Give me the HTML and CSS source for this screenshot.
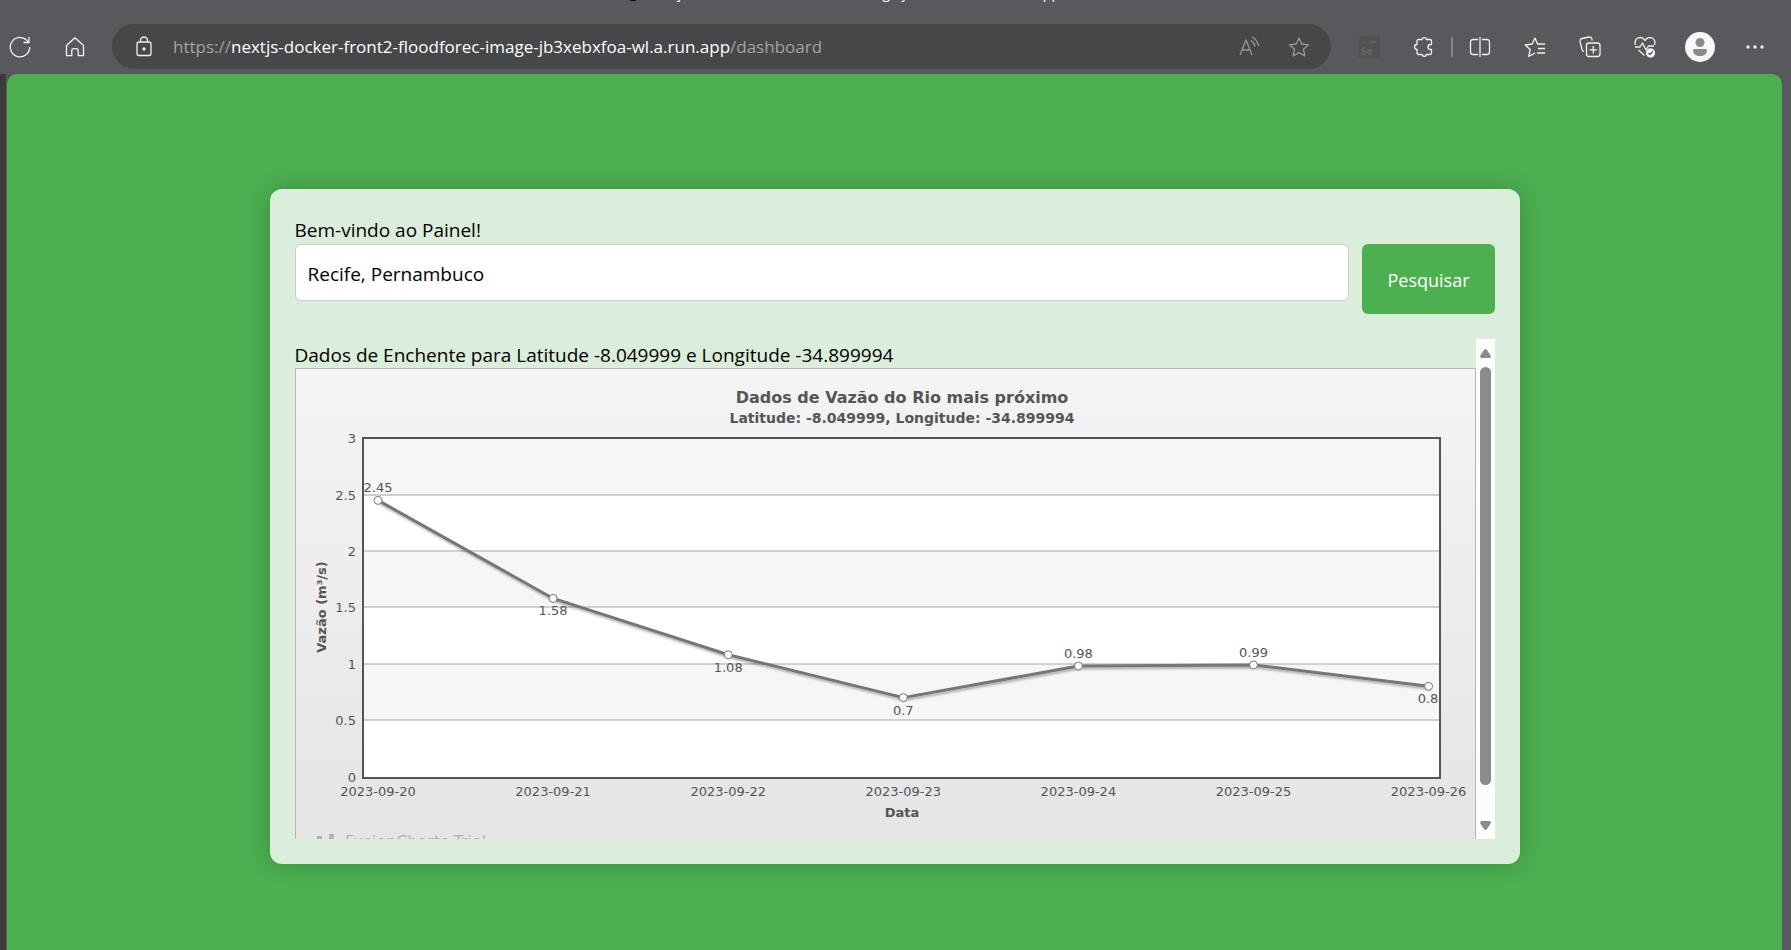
FILE: index.html
```html
<!DOCTYPE html>
<html lang="pt-BR">
  <head>
    <meta charset="UTF-8" />
    <title>Painel</title>
    <link rel="stylesheet" href="styles.css">
  </head>
  <body>
    <div class="tab">
      <span class="favicon"></span>
      nextjs-docker-front2-floodforec-image-jb3xebxfoa-wl.a.run.app
    </div>
    <header class="toolbar">
      <div class="nav">
        <button class="tool" aria-label="Atualizar">
          <svg width="24" height="24" viewBox="0 0 24 24"><path d="M20.500 7.500A9.700 9.700 0 1 0 21.700 12M21 2v5.500h-5.500" /></svg>
        </button>
        <button class="tool" aria-label="Início">
          <svg width="24" height="24" viewBox="0 0 24 24"><path d="M3.500 10.500 12 2.800l8.500 7.700v10.200h-5.300v-5a2 2 0 0 0-2-2h-2.400a2 2 0 0 0-2 2v5H3.500z" /></svg>
        </button>
      </div>
      <div class="address">
        <button class="tool" aria-label="Informações do site">
          <svg width="24" height="24" viewBox="0 0 24 24"><rect x="5" y="7" width="14" height="13.500" rx="2" /><path d="M8.500 7V5.500a3.500 3.500 0 0 1 7 0V7" /><circle class="solid" cx="12" cy="14" r="1" /></svg>
        </button>
        <p class="url">https://<span>nextjs-docker-front2-floodforec-image-jb3xebxfoa-wl.a.run.app</span>/dashboard</p>
        <button class="tool dim" aria-label="Ler em voz alta">
          <svg width="24" height="24" viewBox="0 0 24 24"><path d="M3 20 9 5l6 15M5 15h8M14 5.500a9 9 0 0 1 4 6M15 2a12 12 0 0 1 6.500 9" /></svg>
        </button>
        <button class="tool dim" aria-label="Favoritar">
          <svg width="24" height="24" viewBox="0 0 24 24"><path d="m12 3 2.800 6 6.700.8-5 4.500 1.400 6.700-5.900-3.400L6.100 21l1.400-6.700-5-4.500 6.700-.8z" /></svg>
        </button>
      </div>
      <div class="extensions">
        <button class="tool ext" aria-label="Selenium">
          <svg width="24" height="24" viewBox="0 0 24 24"><rect x="2" y="2" width="20" height="20" /><path class="block" d="M12 5h8v4h-8z" /><path d="M2 11h20" /><text x="4" y="20">Se</text></svg>
        </button>
        <button class="tool" aria-label="Extensões">
          <svg width="24" height="24" viewBox="0 0 24 24"><path d="M6.500 4.500H10a2.300 2.300 0 0 1 4.500 0H18A1.500 1.500 0 0 1 19.500 6v3.500h-1a2.500 2.500 0 0 0 0 5h1V18a1.500 1.500 0 0 1-1.500 1.500h-3.500a2.300 2.300 0 0 1-4.500 0H6.500A1.500 1.500 0 0 1 5 18v-3.500a2.500 2.500 0 0 1 0-5V6a1.500 1.500 0 0 1 1.500-1.500z" /></svg>
        </button>
        <span class="divider"></span>
        <button class="tool" aria-label="Dividir tela">
          <svg width="24" height="24" viewBox="0 0 24 24"><path d="M10 4.500H5A2.500 2.500 0 0 0 2.500 7v10A2.500 2.500 0 0 0 5 19.500h5M14 4.500h5A2.500 2.500 0 0 1 21.500 7v10a2.500 2.500 0 0 1-2.500 2.500h-5M12 2v20" /></svg>
        </button>
        <button class="tool" aria-label="Favoritos">
          <svg width="24" height="24" viewBox="0 0 24 24"><path d="M22 9h-7.500L12 3 9.200 9l-7 1 5 4.500L5.800 21.500 12 18M15 13.500h7M14 18h8" /></svg>
        </button>
        <button class="tool" aria-label="Coleções">
          <svg width="24" height="24" viewBox="0 0 24 24"><rect x="8.500" y="8" width="13.500" height="13.500" rx="2.500" /><path d="M15.300 11v7.500M11.500 14.800H19M6 16.500a2.500 2.500 0 0 1-2-2L2 6.500a2.500 2.500 0 0 1 2-3L11 2a2.500 2.500 0 0 1 3 2v1.500" /></svg>
        </button>
        <button class="tool" aria-label="Desempenho">
          <svg width="24" height="24" viewBox="0 0 24 24"><path d="M2.500 10a5 5 0 0 1 9.500-4.500A5 5 0 0 1 21.500 10M2 12h5l2.500-4 3.500 7 2.500-4H21M5.500 15l6 5.500" /><circle class="solid" cx="17.500" cy="18" r="4" /><path class="check" d="m15.500 18 1.500 1.500 3-3" /></svg>
        </button>
        <button class="tool avatar" aria-label="Perfil">
          <svg width="30" height="30" viewBox="0 0 30 30"><circle cx="15" cy="10.500" r="4.500" /><path d="M8 18.500A1.500 1.500 0 0 1 9.500 17h11a1.500 1.500 0 0 1 1.500 1.500C22 22 19 24 15 24s-7-2-7-5.500z" /></svg>
        </button>
        <button class="tool" aria-label="Mais">
          <svg width="24" height="24" viewBox="0 0 24 24"><g class="solid"><circle cx="5" cy="12" r="1" /><circle cx="12" cy="12" r="1" /><circle cx="19" cy="12" r="1" /></g></svg>
        </button>
      </div>
    </header>

    <div class="window">
      <main class="page">
        <section class="card">
          <form class="search">
            <div class="field">
              <label for="city">Bem-vindo ao Painel!</label>
              <input type="text" id="city" value="Recife, Pernambuco" />
            </div>
            <button type="button" class="submit">Pesquisar</button>
          </form>

          <div class="results">
            <div class="content" id="content">
              <p>Dados de Enchente para Latitude -8.049999 e Longitude -34.899994</p>
              <svg class="chart" viewBox="0 0 1181 500">
                <defs>
                  <linearGradient id="bg" x1="0" y1="0" x2="0" y2="1">
                    <stop offset="0" stop-color="#f4f4f4" />
                    <stop offset="1" stop-color="#e4e4e4" />
                  </linearGradient>
                  <filter id="shadow" x="-5%" y="-5%" width="110%" height="115%">
                    <feDropShadow dx="1" dy="2" stdDeviation="1" flood-color="#000" flood-opacity="0.300" />
                  </filter>
                </defs>
                <rect class="frame" x="0.500" y="0.500" width="1180" height="499" fill="url(#bg)" />
                <text class="title" x="607" y="35">Dados de Vazão do Rio mais próximo</text>
                <text class="subtitle" x="607" y="55">Latitude: -8.049999, Longitude: -34.899994</text>
                <rect class="plot" x="68" y="70" width="1078" height="340" />
                <g id="grid"></g>
                <rect class="border" x="68" y="70" width="1077" height="340" />
                <g id="series"></g>
                <text class="axis" x="607" y="449">Data</text>
                <text class="axis" transform="translate(31 239) rotate(-90)">Vazão (m³/s)</text>
                <g class="trial">
                  <path d="M22 468h5v14h-5zM34 466h5v16h-5z" />
                  <text x="50" y="479">FusionCharts Trial</text>
                </g>
              </svg>
            </div>
            <div class="scrollbar">
              <button id="up" aria-label="Rolar para cima"><svg width="11" height="9" viewBox="0 0 11 9"><path d="M1 9h9l1-2-4-6q-1.500-2-3 0L0 7z" /></svg></button>
              <div class="track"><div class="thumb"></div></div>
              <button id="down" aria-label="Rolar para baixo"><svg width="11" height="9" viewBox="0 0 11 9"><path d="M1 0h9l1 2-4 6q-1.500 2-3 0L0 2z" /></svg></button>
            </div>
          </div>
        </section>
      </main>
    </div>

    <script>
      const data = [
        { day: "2023-09-20", value: 2.45, above: true },
        { day: "2023-09-21", value: 1.58 },
        { day: "2023-09-22", value: 1.08 },
        { day: "2023-09-23", value: 0.7 },
        { day: "2023-09-24", value: 0.98, above: true },
        { day: "2023-09-25", value: 0.99, above: true },
        { day: "2023-09-26", value: 0.8 },
      ];

      const x = (i) => 83 + i * 175.1;
      const y = (value) => 408.5 - value * 112.7;

      // Bands, grid lines and scale
      let grid = "";
      for (let v = 0; v <= 3; v += 0.5) {
        if (v % 1 === 0.5) {
          grid += `<rect class="band" x="69" y="${y(v + 0.5)}" width="1076" height="56" />`;
        }
        if (v > 0 && v < 3) {
          grid += `<path class="line" d="M69 ${Math.round(y(v))}H1145" />`;
        }
        grid += `<text class="scale" x="61" y="${y(v) + 5}">${v}</text>`;
      }
      document.getElementById("grid").innerHTML = grid;

      // Line, markers and labels
      const points = data.map((d, i) => `${x(i)},${y(d.value)}`).join(" ");
      let series = `<polyline class="flow" points="${points}" />`;
      data.forEach((d, i) => {
        const labelX = Math.min(x(i), 1133);
        const labelY = y(d.value) + (d.above ? -8 : 17);
        series += `<circle class="marker" cx="${x(i)}" cy="${y(d.value)}" r="4" />`;
        series += `<text class="label" x="${labelX}" y="${labelY}">${d.value}</text>`;
        series += `<text class="label" x="${x(i)}" y="428">${d.day}</text>`;
      });
      document.getElementById("series").innerHTML = series;

      const content = document.getElementById("content");
      document.getElementById("up").addEventListener("click", () => content.scrollBy(0, -40));
      document.getElementById("down").addEventListener("click", () => content.scrollBy(0, 40));
    </script>
  </body>
</html>
```
FILE: styles.css
```css
* {
  box-sizing: border-box;
}
body {
  margin: 0;
  min-height: 100vh;
  display: flex;
  flex-direction: column;
  background-color: #58595d;
  font-family: "Open Sans", sans-serif;
  font-size: 19px;
}
p {
  margin: 0;
}
button {
  border: 0;
  padding: 0;
  background: none;
  font: inherit;
  cursor: pointer;
}

/* Browser toolbar */
.tab {
  display: flex;
  gap: 8px;
  height: 19px;
  margin-top: -17px;
  padding-left: 625px;
  line-height: 19px;
  font-size: 14px;
  white-space: nowrap;
  color: #fff;
}
.favicon {
  width: 16px;
  height: 16px;
  margin-top: 2px;
  border-radius: 50%;
  background-color: #000;
}
.toolbar {
  display: flex;
  align-items: center;
  padding: 22px 24px 5px 8px;
}
.nav {
  display: flex;
  gap: 31px;
  margin-right: 25px;
}
.tool {
  display: flex;
  flex-shrink: 0;
}
.tool svg {
  fill: none;
  stroke: #f2f2f2;
  stroke-width: 1.3;
  stroke-linejoin: round;
}
.tool .solid {
  fill: #f8f8f8;
}
.tool .check {
  stroke: #58595d;
}
.address {
  flex: 1;
  display: flex;
  align-items: center;
  gap: 26px;
  height: 45px;
  padding: 0 20px;
  border-radius: 23px;
  background-color: #464749;
}
.url {
  flex: 1;
  margin-left: -9px;
  white-space: nowrap;
  font-size: 17px;
  color: #a3a3a3;
}
.url span {
  color: #fff;
}
.dim svg {
  stroke: #98989a;
}
.extensions {
  display: flex;
  align-items: center;
  gap: 31px;
  margin-left: 26px;
}
.ext svg {
  stroke: #505151;
  fill: #525355;
}
.ext .block {
  fill: #5d5e60;
}
.ext text {
  font-size: 10px;
  font-weight: bold;
  fill: #66676a;
  stroke: none;
}
.divider {
  width: 2px;
  height: 20px;
  margin: 0 -16px;
  background-color: #858689;
}
.avatar {
  margin: 0 -3px;
  border-radius: 50%;
  background-color: #f8f8f8;
}
.avatar svg {
  fill: #8b8b8b;
  stroke: none;
}

/* Page */
.window {
  flex: 1;
  display: flex;
  padding-right: 9px;
  border-left: 6px solid #3b3b3e;
}
.page {
  flex: 1;
  margin-left: 1px;
  padding: 115px 24px 86px;
  border-radius: 10px 10px 0 0;
  background-color: #4caf50;
}
.card {
  max-width: 1250px;
  margin: 0 auto;
  padding: 25px;
  border-radius: 12px;
  background-color: #dbeedb;
  box-shadow: 0 0 25px rgba(0, 0, 0, 0.2);
}
.search {
  display: flex;
  align-items: flex-end;
  gap: 13px;
  margin-bottom: 25px;
}
.field {
  flex: 1;
  padding-bottom: 13px;
}
.field label {
  display: block;
  padding-top: 2px;
  line-height: 28px;
}
.field input {
  display: block;
  width: 100%;
  height: 57px;
  padding: 2px 12px 0;
  border: 1px solid #ccc;
  border-radius: 6px;
  background-color: #fff;
  font: inherit;
}
.submit {
  height: 70px;
  padding: 2px 25px 0;
  border-radius: 6px;
  background-color: #4caf50;
  font-size: 18px;
  color: #fff;
}
.results {
  display: flex;
  height: 500px;
}
.content {
  flex: 1;
  overflow-y: auto;
  scrollbar-width: none;
}
.content p {
  padding-top: 3px;
  line-height: 26px;
}
.scrollbar {
  display: flex;
  flex-direction: column;
  align-items: center;
  width: 19px;
  padding: 10px 0 9px;
  background-color: #fcfcfc;
}
.scrollbar button {
  display: flex;
}
.scrollbar svg {
  fill: #8b8b8b;
}
.track {
  flex: 1;
  width: 11px;
  margin: 9px 0;
}
.thumb {
  height: 94%;
  border-radius: 6px;
  background-color: #8b8b8b;
}

/* Chart */
.chart {
  display: block;
  width: 100%;
  font-family: "DejaVu Sans", sans-serif;
  font-size: 13px;
  fill: #555;
}
.frame {
  stroke: #b5b5b5;
}
.title,
.subtitle,
.axis {
  font-weight: bold;
  text-anchor: middle;
}
.title {
  font-size: 16px;
}
.subtitle {
  font-size: 14px;
}
.plot {
  fill: #fff;
}
.border {
  fill: none;
  stroke: #545454;
  stroke-width: 2;
}
.band {
  fill: #f6f6f6;
}
.line {
  stroke: #d0d0d0;
  stroke-width: 2;
}
.scale {
  text-anchor: end;
}
.flow {
  fill: none;
  stroke: #767676;
  stroke-width: 3;
  stroke-linejoin: round;
  filter: url(#shadow);
}
.marker {
  fill: #fff;
  stroke: #767676;
}
.label {
  text-anchor: middle;
}
.trial {
  font-size: 16px;
  fill: #b3b3b6;
}
```
